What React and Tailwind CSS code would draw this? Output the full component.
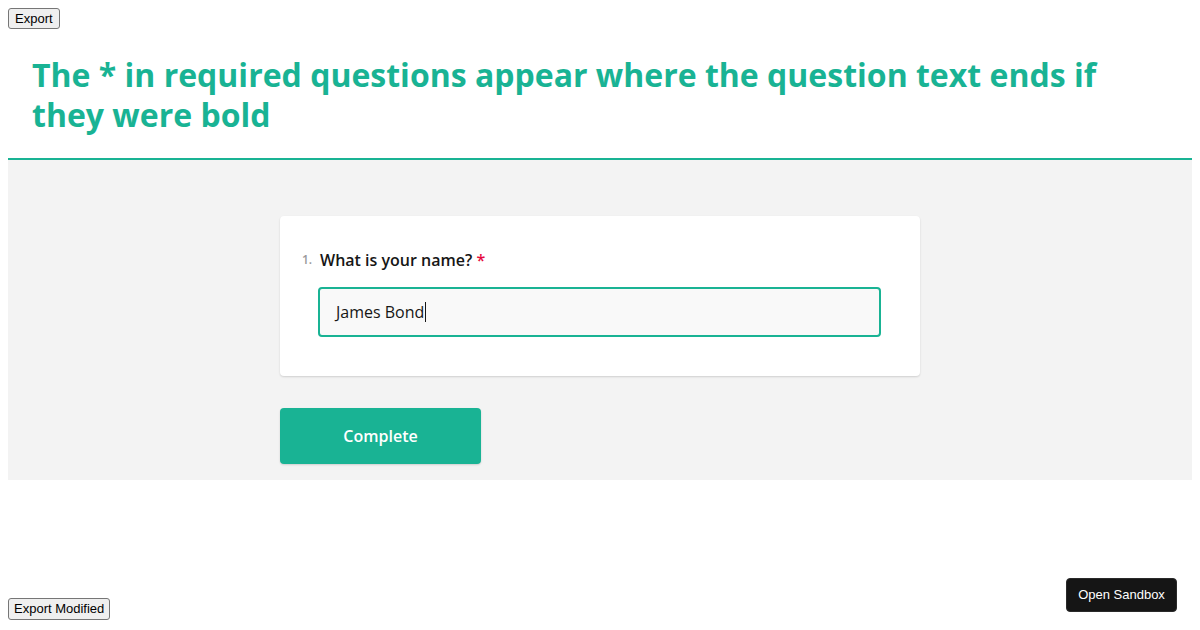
export default function App() {
  return (
    <div className="relative min-h-[630px] bg-white p-2 font-['Open_Sans',sans-serif]">
      {/* Top toolbar */}
      <button className="block h-[21px] rounded-[3px] border border-[#767676] bg-[#efefef] px-[6px] font-['Liberation_Sans',Arial,sans-serif] text-[13px] leading-[19px] text-black">
        Export
      </button>

      {/* Header */}
      <div className="border-b-2 border-[#19b394] px-6 pt-[26px] pb-[23px]">
        <h1 className="max-w-[1100px] text-[32px] font-bold leading-[40px] text-[#19b394]">
          The * in required questions appear where the question text ends if they were bold
        </h1>
      </div>

      {/* Survey body */}
      <div className="bg-[#f3f3f3] pt-14 pb-4">
        <div className="mx-auto w-[640px]">
          <div className="rounded bg-white pt-8 pb-[39px] pl-[22px] pr-[39px] shadow-[0_1px_2px_rgba(0,0,0,0.15)]">
            <div className="flex">
              <span className="w-4 pt-[4px] text-xs font-semibold leading-[16px] text-[#9a9a9a]">1.</span>
              <div className="flex-1">
                <div className="pl-[2px] text-base font-semibold leading-6 text-[#161616]">
                  What is your name? <span className="text-[#e60a3e]">*</span>
                </div>
                <div className="mt-[15px] flex h-[50px] items-center rounded border-2 border-[#19b394] bg-[#f9f9f9] px-4 text-base text-[#161616]">
                  James Bond
                  <span className="ml-px inline-block h-[20px] w-px bg-[#161616]" />
                </div>
              </div>
            </div>
          </div>

          <button className="mt-8 h-14 w-[201px] rounded bg-[#19b394] text-base font-semibold text-white shadow-[0_1px_2px_rgba(0,0,0,0.15)]">
            Complete
          </button>
        </div>
      </div>

      {/* Bottom toolbar */}
      <button className="mt-[118px] block h-[22px] rounded-[3px] border border-[#767676] bg-[#efefef] px-[5px] font-['Liberation_Sans',Arial,sans-serif] text-[13px] leading-[20px] text-black">
        Export Modified
      </button>

      <button className="absolute right-[23px] bottom-[18px] h-[34px] w-[111px] rounded border border-[#2a2a2a] bg-[#151515] font-['Liberation_Sans',Arial,sans-serif] text-[13px] text-white">
        Open Sandbox
      </button>
    </div>
  )
}
